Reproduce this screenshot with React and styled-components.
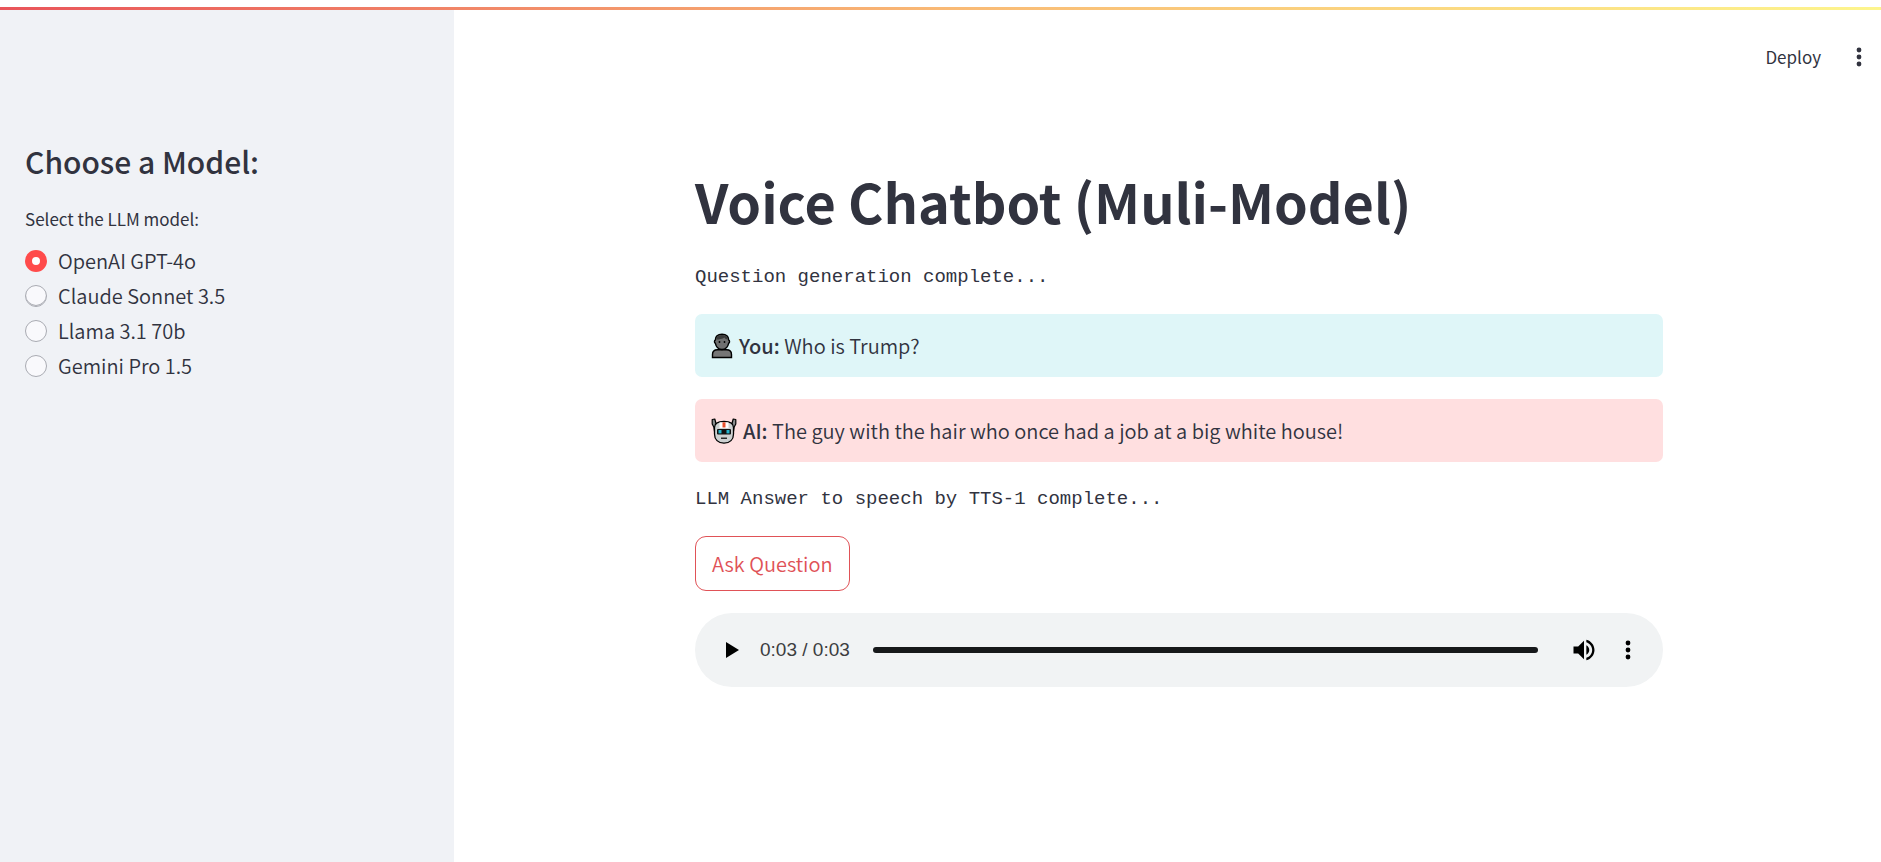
import React, { useState } from 'react';
import styled, { createGlobalStyle } from 'styled-components';

const GlobalStyle = createGlobalStyle`
  *, *::before, *::after {
    box-sizing: border-box;
  }
  body {
    margin: 0;
    background: #ffffff;
    color: #31333f;
    font-family: 'Noto Sans CJK SC', 'Noto Sans', sans-serif;
    font-size: 20px;
    font-weight: 350;
  }
  button, input {
    font: inherit;
    color: inherit;
    margin: 0;
  }
`;

const Page = styled.div`
  display: flex;
  flex-direction: column;
  min-height: 100vh;
  padding-top: 7px;
`;

const Decoration = styled.div`
  height: 3px;
  background: linear-gradient(90deg, #e9545a, #f9b975 50%, #fdf58d);
`;

const Body = styled.div`
  display: flex;
  flex: 1;
`;

const Sidebar = styled.aside`
  flex: 0 0 454px;
  padding: 131px 25px 24px;
  background: #f0f2f6;
`;

const SidebarTitle = styled.h2`
  margin: 0 0 24px;
  font-size: 30px;
  font-weight: 500;
  line-height: 40px;
`;

const Options = styled.fieldset`
  margin: 0;
  padding: 0;
  border: 0;
`;

const Legend = styled.legend`
  margin-bottom: 10px;
  padding: 0;
  font-size: 17px;
  font-weight: 400;
  line-height: 28px;
`;

const Option = styled.label`
  display: flex;
  align-items: center;
  gap: 11px;
  height: 35px;
  cursor: pointer;
`;

const Radio = styled.input`
  appearance: none;
  width: 22px;
  height: 22px;
  border: 1px solid #a9abb2;
  border-radius: 50%;
  background: #f9f9fc;
  box-shadow: ${(p) => (p.$raised ? 'inset 0 -1px 0 #a9abb2' : 'none')};

  &:checked {
    border: 7px solid #ff4b4b;
    background: #ffffff;
  }
`;

const Content = styled.div`
  position: relative;
  flex: 1;
  min-width: 0;
  padding: 151px 24px 40px 47px;
`;

const Toolbar = styled.header`
  position: absolute;
  top: 30px;
  right: 10px;
  display: flex;
  align-items: center;
  gap: 26px;
`;

const ToolbarButton = styled.button`
  display: flex;
  align-items: center;
  padding: 0;
  border: 0;
  background: none;
  font-size: 17px;
  font-weight: 400;
  line-height: 33px;
  cursor: pointer;
`;

const Column = styled.main`
  display: flex;
  flex-direction: column;
  align-items: flex-start;
  gap: 22px;
  max-width: 968px;
  margin: 0 auto;
`;

const Title = styled.h1`
  margin: 0;
  font-size: 54px;
  font-weight: 700;
  line-height: 79px;
`;

const Status = styled.div`
  font-family: 'Liberation Mono', monospace;
  font-size: 19px;
  line-height: 30px;
`;

const Message = styled.div`
  display: flex;
  align-items: center;
  gap: 6px;
  width: 100%;
  padding: 14px 16px;
  border-radius: 7px;
  background: ${(p) => (p.$from === 'user' ? '#dff6f8' : '#ffdfe0')};
  line-height: 35px;

  strong {
    font-weight: 500;
  }
`;

const AskButton = styled.button`
  height: 55px;
  padding: 0 16px;
  border: 1px solid #e05257;
  border-radius: 11px;
  background: #ffffff;
  color: #e05257;
  cursor: pointer;
`;

const Player = styled.div`
  display: flex;
  align-items: center;
  width: 100%;
  height: 74px;
  padding: 0 13px 0 15px;
  border-radius: 37px;
  background: #f1f3f4;
`;

const PlayerButton = styled.button`
  display: flex;
  justify-content: center;
  width: 44px;
  padding: 0;
  border: 0;
  background: none;
  color: #000000;
  cursor: pointer;
`;

const Time = styled.span`
  margin: 0 23px 0 6px;
  color: #3c3d3f;
  font-family: 'Liberation Sans', sans-serif;
  font-size: 19px;
`;

const Seek = styled.input`
  appearance: none;
  flex: 1;
  min-width: 0;
  height: 6px;
  margin-right: 24px;
  border-radius: 3px;
  background: #16181a;

  &::-webkit-slider-thumb {
    appearance: none;
    width: 1px;
    height: 6px;
  }
`;

const DotsIcon = () => (
  <svg width="24" height="24" viewBox="0 0 24 24" fill="currentColor" aria-hidden="true">
    <circle cx="12" cy="5" r="2.4" />
    <circle cx="12" cy="12" r="2.4" />
    <circle cx="12" cy="19" r="2.4" />
  </svg>
);

const PlayIcon = () => (
  <svg width="26" height="26" viewBox="0 0 26 26" aria-hidden="true">
    <path d="M7 5v16l13-8z" fill="#000" />
  </svg>
);

const VolumeIcon = () => (
  <svg width="28" height="28" viewBox="0 0 24 24" aria-hidden="true">
    <path
      fill="#000"
      d="M3 9v6h4l5 5V4L7 9H3zm13.5 3c0-1.77-1.02-3.29-2.5-4.03v8.05c1.48-.73 2.5-2.25 2.5-4.02zM14 3.23v2.06c2.89.86 5 3.54 5 6.71s-2.11 5.85-5 6.71v2.06c4.01-.91 7-4.49 7-8.77s-2.99-7.86-7-8.77z"
    />
  </svg>
);

const PersonIcon = () => (
  <svg width="22" height="26" viewBox="0 0 22 26" aria-hidden="true">
    <path
      d="M1.5 24.5v-3c0-3.500 2-4.800 5-4.800h9c3 0 5 1.300 5 4.800v3z"
      fill="#767676"
      stroke="#000"
      strokeWidth="1.4"
    />
    <path
      d="M11 1.200c4 0 6.600 2.300 6.800 6 1 .4 1 2.600-.1 3-.8 3.800-3.600 6.300-6.700 6.300s-5.900-2.500-6.700-6.300c-1.100-.4-1.100-2.600-.1-3 .2-3.700 2.800-6 6.800-6z"
      fill="#707070"
      stroke="#000"
      strokeWidth="1.4"
    />
    <path d="M5 6.500C5.500 3.500 8 2 11 2s5.500 1.500 6 4.500c-2 0-3-.8-3.500-2C11.500 6 8 6.500 5 6.500z" fill="#3a3a3a" />
    <circle cx="8.500" cy="9" r="0.9" fill="#000" />
    <circle cx="13.500" cy="9" r="0.9" fill="#000" />
  </svg>
);

const RobotIcon = () => (
  <svg width="26" height="26" viewBox="0 0 26 26" aria-hidden="true">
    <path
      d="M1.200 1.500l2.600-.5 1.200 4.500v8H3.500L2.800 9 1.200 6zM24.800 1.500L22.200 1 21 5.500v8h1.500l.7-4.500 1.600-3z"
      fill="#8a8d8e"
      stroke="#000"
      strokeWidth="1.2"
      strokeLinejoin="round"
    />
    <path
      d="M3.500 9.500C3.500 5 7 3.500 13 3.500s9.500 1.500 9.500 6V16c0 5.500-3.500 9.200-9.500 9.200S3.500 21.500 3.500 16z"
      fill="#cdd0d1"
      stroke="#000"
      strokeWidth="1.3"
    />
    <path d="M8.500 4.300h9V10h-9z" fill="#ffffff" />
    <path d="M11.500 4.300h3V9.500h-3z" fill="#e8502e" />
    <rect x="6" y="11" width="14" height="5.500" rx="1" fill="#111" />
    <rect x="7.500" y="12" width="3" height="3.400" fill="#24b5ce" />
    <rect x="15.500" y="12" width="3" height="3.400" fill="#24b5ce" />
    <path d="M10 20.200h6" stroke="#000" strokeWidth="1.2" />
  </svg>
);

const models = ['OpenAI GPT-4o', 'Claude Sonnet 3.5', 'Llama 3.1 70b', 'Gemini Pro 1.5'];

const App = () => {
  const [model, setModel] = useState(models[0]);
  const [position, setPosition] = useState(3);

  return (
    <>
      <GlobalStyle />
      <Page>
        <Decoration />
        <Body>
          <Sidebar>
            <SidebarTitle>Choose a Model:</SidebarTitle>
            <Options>
              <Legend>Select the LLM model:</Legend>
              {models.map((name, i) => (
                <Option key={name}>
                  <Radio
                    type="radio"
                    name="model"
                    value={name}
                    checked={model === name}
                    $raised={i === 1}
                    onChange={() => setModel(name)}
                  />
                  {name}
                </Option>
              ))}
            </Options>
          </Sidebar>
          <Content>
            <Toolbar>
              <ToolbarButton type="button">Deploy</ToolbarButton>
              <ToolbarButton type="button" aria-label="Main menu">
                <DotsIcon />
              </ToolbarButton>
            </Toolbar>
            <Column>
              <Title>Voice Chatbot (Muli-Model)</Title>
              <Status>Question generation complete...</Status>
              <Message $from="user">
                <PersonIcon />
                <span>
                  <strong>You:</strong> Who is Trump?
                </span>
              </Message>
              <Message $from="ai">
                <RobotIcon />
                <span>
                  <strong>AI:</strong> The guy with the hair who once had a job at a big white house!
                </span>
              </Message>
              <Status>LLM Answer to speech by TTS-1 complete...</Status>
              <AskButton type="button">Ask Question</AskButton>
              <Player>
                <PlayerButton type="button" aria-label="Play">
                  <PlayIcon />
                </PlayerButton>
                <Time>0:03 / 0:03</Time>
                <Seek
                  type="range"
                  min="0"
                  max="3"
                  value={position}
                  aria-label="Seek"
                  onChange={(e) => setPosition(Number(e.target.value))}
                />
                <PlayerButton type="button" aria-label="Mute">
                  <VolumeIcon />
                </PlayerButton>
                <PlayerButton type="button" aria-label="More options">
                  <DotsIcon />
                </PlayerButton>
              </Player>
            </Column>
          </Content>
        </Body>
      </Page>
    </>
  );
};

export default App;
